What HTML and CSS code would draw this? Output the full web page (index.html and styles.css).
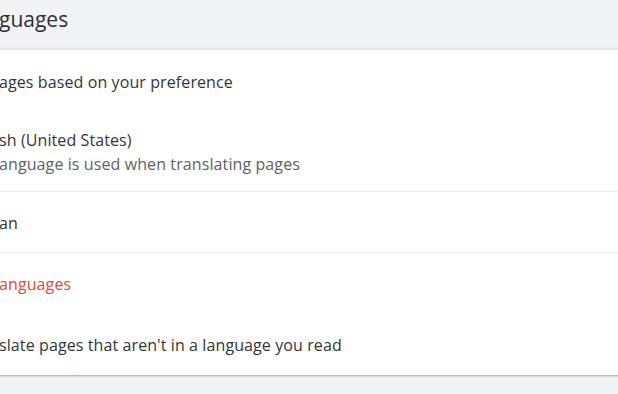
FILE: index.html
```html
<!DOCTYPE html>
<html lang="en">
<head>
<meta charset="utf-8">
<title>Languages</title>
<link rel="stylesheet" href="styles.css">
</head>
<body>
<header class="page-head">
  <h1 class="title">guages</h1>
</header>
<section class="card">
  <div class="row">
    <span class="primary">ages based on your preference</span>
  </div>
  <div class="row row-tall">
    <span class="primary">sh (United States)</span>
    <span class="secondary">anguage is used when translating pages</span>
  </div>
  <div class="row row-divided">
    <span class="primary">an</span>
  </div>
  <div class="row row-divided">
    <span class="link">anguages</span>
  </div>
  <div class="row">
    <span class="primary">slate pages that aren't in a language you read</span>
  </div>
</section>
</body>
</html>
```

FILE: styles.css
```css
html, body {
  margin: 0;
  padding: 0;
}
body {
  background: #f2f3f5;
  font-family: "Open Sans", "Lato", sans-serif;
  color: #333438;
  width: 618px;
  height: 394px;
  overflow: hidden;
}
.page-head {
  height: 49px;
  display: flex;
  align-items: center;
  padding-bottom: 2px;
  box-sizing: border-box;
}
.title {
  margin: 0 0 0 -1px;
  font-size: 21px;
  font-weight: 400;
  color: #2f3034;
  position: relative;
  top: -5px;
}
.card {
  background: #fff;
  border-top: 1px solid #e6e7e9;
  box-shadow: 0 -1px 2px rgba(0,0,0,0.05), 0 1px 2px rgba(0,0,0,0.35);
  margin-left: -10px;
  margin-right: -10px;
  padding-left: 10px;
  padding-right: 10px;
}
.row {
  height: 62px;
  padding-top: 2px;
  display: flex;
  flex-direction: column;
  justify-content: center;
  box-sizing: border-box;
}
.row-tall {
  height: 79px;
  gap: 1px;
}
.row-divided {
  border-top: 1px solid #ececec;
  height: 61px;
}
.primary, .secondary, .link {
  font-size: 16px;
  letter-spacing: 0.1px;
  margin-left: -1px;
  line-height: 23px;
}
.primary {
  color: #333438;
}
.secondary {
  color: #5f6166;
}
.link {
  color: #e8472d;
}
```
